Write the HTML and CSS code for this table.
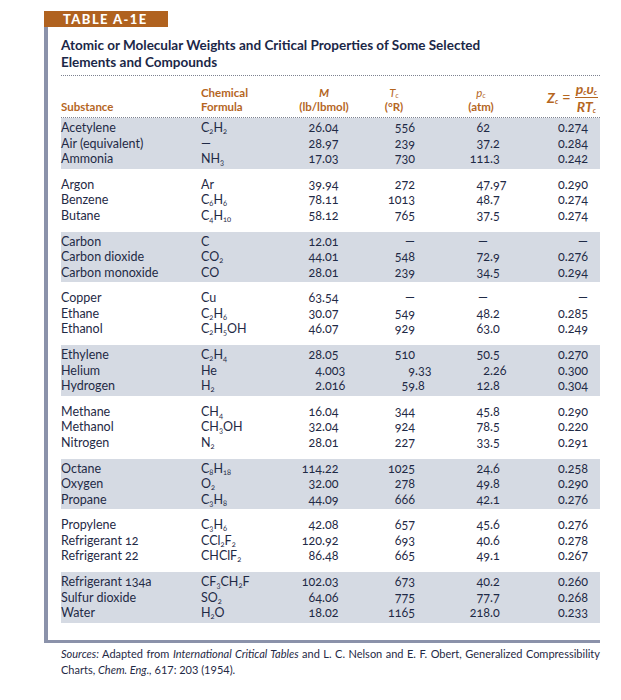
FILE: index.html
```html
<!DOCTYPE html>
<html>
<head>
<meta charset="utf-8">
<link rel="stylesheet" href="styles.css">
</head>
<body>
<div class="sheet">
  <div class="tab">TABLE A-1E</div>
  <div class="frame">
    <div class="title">Atomic or Molecular Weights and Critical Properties of Some Selected<br>Elements and Compounds</div>
    <div class="head">
      <div class="h-sub">Substance</div>
      <div class="h-form">Chemical<br>Formula</div>
      <div class="h-c"><i class="sym-b">M</i><br>(lb/lbmol)</div>
      <div class="h-c"><i class="sym">T<sub>c</sub></i><br>(°R)</div>
      <div class="h-c"><i class="sym">p<sub>c</sub></i><br>(atm)</div>
      <div class="h-z">
        <i class="zsym">Z<sub>c</sub></i><span class="eq">=</span>
        <span class="frac"><span class="num"><i>p<sub>c</sub>υ<sub>c</sub></i></span><span class="den"><i>RT<sub>c</sub></i></span></span>
      </div>
    </div>
    <div class="groups">
      <div class="group shaded">
        <div class="row"><span>Acetylene</span><span>C<sub>2</sub>H<sub>2</sub></span><span class="m"><b>26</b>.04</span><span class="t"><b>556</b></span><span class="p"><b>62</b></span><span class="z">0.274</span></div>
        <div class="row"><span>Air (equivalent)</span><span>—</span><span class="m"><b>28</b>.97</span><span class="t"><b>239</b></span><span class="p"><b>37</b>.2</span><span class="z">0.284</span></div>
        <div class="row"><span>Ammonia</span><span>NH<sub>3</sub></span><span class="m"><b>17</b>.03</span><span class="t"><b>730</b></span><span class="p"><b>111</b>.3</span><span class="z">0.242</span></div>
      </div>
      <div class="group">
        <div class="row"><span>Argon</span><span>Ar</span><span class="m"><b>39</b>.94</span><span class="t"><b>272</b></span><span class="p"><b>47</b>.97</span><span class="z">0.290</span></div>
        <div class="row"><span>Benzene</span><span>C<sub>6</sub>H<sub>6</sub></span><span class="m"><b>78</b>.11</span><span class="t"><b>1013</b></span><span class="p"><b>48</b>.7</span><span class="z">0.274</span></div>
        <div class="row"><span>Butane</span><span>C<sub>4</sub>H<sub>10</sub></span><span class="m"><b>58</b>.12</span><span class="t"><b>765</b></span><span class="p"><b>37</b>.5</span><span class="z">0.274</span></div>
      </div>
      <div class="group shaded">
        <div class="row"><span>Carbon</span><span>C</span><span class="m"><b>12</b>.01</span><span class="t"><b>—</b></span><span class="p dash"><b>—</b></span><span class="z">—</span></div>
        <div class="row"><span>Carbon dioxide</span><span>CO<sub>2</sub></span><span class="m"><b>44</b>.01</span><span class="t"><b>548</b></span><span class="p"><b>72</b>.9</span><span class="z">0.276</span></div>
        <div class="row"><span>Carbon monoxide</span><span>CO</span><span class="m"><b>28</b>.01</span><span class="t"><b>239</b></span><span class="p"><b>34</b>.5</span><span class="z">0.294</span></div>
      </div>
      <div class="group">
        <div class="row"><span>Copper</span><span>Cu</span><span class="m"><b>63</b>.54</span><span class="t"><b>—</b></span><span class="p dash"><b>—</b></span><span class="z">—</span></div>
        <div class="row"><span>Ethane</span><span>C<sub>2</sub>H<sub>6</sub></span><span class="m"><b>30</b>.07</span><span class="t"><b>549</b></span><span class="p"><b>48</b>.2</span><span class="z">0.285</span></div>
        <div class="row"><span>Ethanol</span><span>C<sub>2</sub>H<sub>5</sub>OH</span><span class="m"><b>46</b>.07</span><span class="t"><b>929</b></span><span class="p"><b>63</b>.0</span><span class="z">0.249</span></div>
      </div>
      <div class="group shaded">
        <div class="row"><span>Ethylene</span><span>C<sub>2</sub>H<sub>4</sub></span><span class="m"><b>28</b>.05</span><span class="t"><b>510</b></span><span class="p"><b>50</b>.5</span><span class="z">0.270</span></div>
        <div class="row"><span>Helium</span><span>He</span><span class="m"><b>4</b>.003</span><span class="t"><b>9</b>.33</span><span class="p"><b>2</b>.26</span><span class="z">0.300</span></div>
        <div class="row"><span>Hydrogen</span><span>H<sub>2</sub></span><span class="m"><b>2</b>.016</span><span class="t"><b>59</b>.8</span><span class="p"><b>12</b>.8</span><span class="z">0.304</span></div>
      </div>
      <div class="group">
        <div class="row"><span>Methane</span><span>CH<sub>4</sub></span><span class="m"><b>16</b>.04</span><span class="t"><b>344</b></span><span class="p"><b>45</b>.8</span><span class="z">0.290</span></div>
        <div class="row"><span>Methanol</span><span>CH<sub>3</sub>OH</span><span class="m"><b>32</b>.04</span><span class="t"><b>924</b></span><span class="p"><b>78</b>.5</span><span class="z">0.220</span></div>
        <div class="row"><span>Nitrogen</span><span>N<sub>2</sub></span><span class="m"><b>28</b>.01</span><span class="t"><b>227</b></span><span class="p"><b>33</b>.5</span><span class="z">0.291</span></div>
      </div>
      <div class="group shaded">
        <div class="row"><span>Octane</span><span>C<sub>8</sub>H<sub>18</sub></span><span class="m"><b>114</b>.22</span><span class="t"><b>1025</b></span><span class="p"><b>24</b>.6</span><span class="z">0.258</span></div>
        <div class="row"><span>Oxygen</span><span>O<sub>2</sub></span><span class="m"><b>32</b>.00</span><span class="t"><b>278</b></span><span class="p"><b>49</b>.8</span><span class="z">0.290</span></div>
        <div class="row"><span>Propane</span><span>C<sub>3</sub>H<sub>8</sub></span><span class="m"><b>44</b>.09</span><span class="t"><b>666</b></span><span class="p"><b>42</b>.1</span><span class="z">0.276</span></div>
      </div>
      <div class="group">
        <div class="row"><span>Propylene</span><span>C<sub>3</sub>H<sub>6</sub></span><span class="m"><b>42</b>.08</span><span class="t"><b>657</b></span><span class="p"><b>45</b>.6</span><span class="z">0.276</span></div>
        <div class="row"><span>Refrigerant 12</span><span>CCl<sub>2</sub>F<sub>2</sub></span><span class="m"><b>120</b>.92</span><span class="t"><b>693</b></span><span class="p"><b>40</b>.6</span><span class="z">0.278</span></div>
        <div class="row"><span>Refrigerant 22</span><span>CHClF<sub>2</sub></span><span class="m"><b>86</b>.48</span><span class="t"><b>665</b></span><span class="p"><b>49</b>.1</span><span class="z">0.267</span></div>
      </div>
      <div class="group shaded">
        <div class="row"><span>Refrigerant 134a</span><span>CF<sub>3</sub>CH<sub>2</sub>F</span><span class="m"><b>102</b>.03</span><span class="t"><b>673</b></span><span class="p"><b>40</b>.2</span><span class="z">0.260</span></div>
        <div class="row"><span>Sulfur dioxide</span><span>SO<sub>2</sub></span><span class="m"><b>64</b>.06</span><span class="t"><b>775</b></span><span class="p"><b>77</b>.7</span><span class="z">0.268</span></div>
        <div class="row"><span>Water</span><span>H<sub>2</sub>O</span><span class="m"><b>18</b>.02</span><span class="t"><b>1165</b></span><span class="p"><b>218</b>.0</span><span class="z">0.233</span></div>
      </div>
    </div>
  </div>
  <div class="sources">
    <p class="src-line just"><i>Sources:</i> Adapted from <i>International Critical Tables</i> and L. C. Nelson and E. F. Obert, Generalized Compressibility</p>
    <p class="src-line">Charts, <i>Chem. Eng.,</i> 617: 203 (1954).</p>
  </div>
</div>
</body>
</html>
```
FILE: styles.css
```css
body {
  margin: 0;
  background: #ffffff;
  font-family: Lato, "Noto Sans", sans-serif;
  color: #1f2a46;
}

.sheet {
  width: 556px;
  padding: 11px 0 0 44px;
}

.tab {
  width: 124px;
  height: 16px;
  box-sizing: border-box;
  padding-left: 19px;
  background: #b0621f;
  color: #ffffff;
  font-size: 13px;
  font-weight: 900;
  letter-spacing: 1.4px;
  line-height: 16px;
}

.frame {
  border-left: 4px solid #8b92aa;
  border-bottom: 3px solid #8b92aa;
  padding: 9.5px 0 17px 13px;
}

.title {
  font-size: 13.5px;
  font-weight: 700;
  line-height: 17px;
  color: #1b2747;
  padding-bottom: 4px;
  border-bottom: 1px dotted #7d8290;
}

.head {
  display: grid;
  grid-template-columns: 140px 83px 80px 60px 114px 62px;
  align-items: end;
  padding: 10.5px 0 3px;
  border-bottom: 1px dotted #7d8290;
  color: #b5661f;
  font-size: 11.5px;
  font-weight: 700;
  line-height: 14px;
}

.h-c {
  text-align: center;
}

.sym {
  font-weight: 400;
}

.sym-b {
  font-weight: 700;
}

.head sub {
  font-size: 7px;
  vertical-align: -1px;
  line-height: 0;
  font-style: italic;
}

.h-z {
  align-self: start;
  height: 34px;
  margin: -6px 0 0;
  display: flex;
  align-items: center;
  justify-content: flex-end;
  padding-right: 2px;
  font-size: 14px;
  line-height: 15px;
}

.zsym {
  font-weight: 700;
}

.eq {
  margin: 0 4px;
  font-weight: 400;
  font-size: 15px;
}

.frac {
  display: inline-flex;
  flex-direction: column;
  align-items: center;
  line-height: 15px;
}

.num {
  padding: 0 1px 1px;
  border-bottom: 1px solid #b5661f;
  font-weight: 700;
}

.den {
  padding-top: 1px;
  font-weight: 700;
}

.groups {
  display: flex;
  flex-direction: column;
  gap: 6.25px;
}

.group {
  padding: 2px 0;
}

.group.shaded {
  background: #d5dae3;
}

.row {
  display: grid;
  grid-template-columns: 140px 99px 60px 80px 80px 80px;
  font-size: 12.5px;
  line-height: 15.5px;
  font-variant-numeric: oldstyle-nums;
  white-space: nowrap;
}

.row sub {
  font-size: 7.5px;
  vertical-align: -2px;
  line-height: 0;
}

.m,
.t,
.p {
  display: grid;
}

.m {
  grid-template-columns: 22px 1fr;
}

.t {
  grid-template-columns: 55px 1fr;
}

.p {
  grid-template-columns: 50px 1fr;
}

.m b,
.t b,
.p b {
  font-weight: 400;
  text-align: right;
}

.p.dash {
  grid-template-columns: 48px 1fr;
}

.z {
  text-align: right;
  padding-right: 12px;
}

.sources {
  width: 539px;
  margin-top: 3px;
  padding-left: 17px;
  font-size: 11px;
  line-height: 16px;
  color: #1f2a46;
}

.src-line {
  margin: 0;
}

.src-line.just {
  text-align: justify;
  text-align-last: justify;
}
```
